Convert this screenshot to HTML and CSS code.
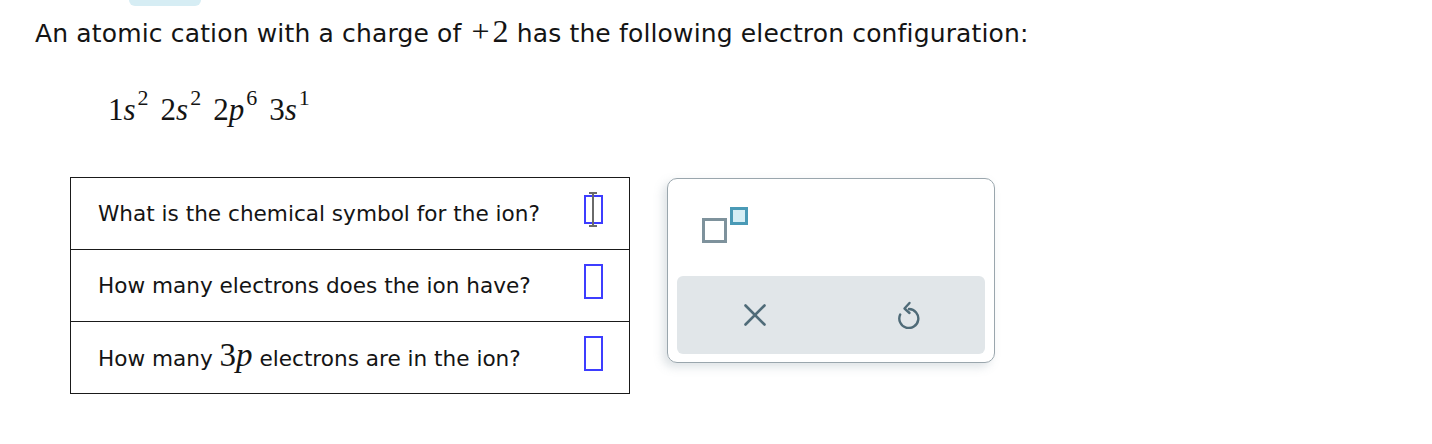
FILE: index.html
```html
<!DOCTYPE html>
<html>
<head>
<meta charset="utf-8">
<link rel="stylesheet" href="styles.css">
</head>
<body>
<div class="tab"></div>
<p class="intro">An atomic cation with a charge of <span class="math"><span class="op">+</span>2</span> has the following electron configuration:</p>
<div class="config">
  <span class="term">1<i>s</i><sup>2</sup></span>
  <span class="term">2<i>s</i><sup>2</sup></span>
  <span class="term">2<i>p</i><sup>6</sup></span>
  <span class="term">3<i>s</i><sup>1</sup></span>
</div>
<div class="work">
  <div class="qtable">
    <div class="qrow">
      <span class="qtext">What is the chemical symbol for the ion?</span>
      <span class="ansbox small"><span class="caret"></span></span>
    </div>
    <div class="qrow">
      <span class="qtext">How many electrons does the ion have?</span>
      <span class="ansbox"></span>
    </div>
    <div class="qrow">
      <span class="qtext">How many <span class="math big">3<i>p</i></span> electrons are in the ion?</span>
      <span class="ansbox"></span>
    </div>
  </div>
  <div class="panel">
    <div class="panel-top">
      <span class="supicon"><span class="base"></span><span class="exp"></span></span>
    </div>
    <div class="panel-actions">
      <svg class="icon" width="24" height="24" viewBox="0 0 24 24"><path d="M2.5 2.5 L21.5 21.5 M21.5 2.5 L2.5 21.5" stroke="#4f6b78" stroke-width="2.6" fill="none" stroke-linecap="round"/></svg>
      <svg class="icon" width="24" height="28" viewBox="0 0 24 28"><path d="M12 8 A9.5 9.5 0 1 1 3.2 13.5" stroke="#4f6b78" stroke-width="2.4" fill="none" stroke-linecap="round"/><path d="M12.5 2 L7.5 7.5 L12.5 12" stroke="#4f6b78" stroke-width="2.4" fill="none" stroke-linecap="round" stroke-linejoin="round"/></svg>
    </div>
  </div>
</div>
</body>
</html>
```
FILE: styles.css
```css
body {
  margin: 0;
  background: #ffffff;
  font-family: "DejaVu Sans", Verdana, sans-serif;
  color: #141414;
}
.tab {
  margin-left: 129px;
  width: 72px;
  height: 6px;
  background: #d6edf4;
  border-radius: 0 0 9px 9px;
}
.intro {
  margin: 13px 0 0 35px;
  font-size: 25px;
  letter-spacing: 0.15px;
  line-height: 30px;
}
.math {
  font-family: "Liberation Serif", "Times New Roman", serif;
  font-size: 32px;
  letter-spacing: 0;
  line-height: 20px;
}
.math .op {
  margin: 0 3px 0 2px;
}
.math i, .config i {
  font-style: italic;
}
.config {
  margin: 37px 0 0 108px;
  font-family: "Liberation Serif", "Times New Roman", serif;
  font-size: 31px;
  line-height: 32px;
  display: flex;
  gap: 12px;
}
.config sup {
  font-size: 22px;
  position: relative;
  top: -4px;
  margin-left: 2px;
}
.work {
  display: flex;
  align-items: flex-start;
  margin: 51px 0 0 70px;
  gap: 37px;
}
.qtable {
  width: 558px;
  border: 1px solid #1a1a1a;
}
.qrow {
  height: 71px;
  display: flex;
  align-items: center;
  justify-content: space-between;
  padding: 0 26px 0 27px;
  border-top: 1px solid #1a1a1a;
  font-size: 21.6px;
}
.qrow:first-child {
  border-top: none;
}
.math.big {
  font-size: 33px;
}
.ansbox {
  width: 15px;
  height: 31px;
  border: 2px solid #3d3dff;
  position: relative;
  display: block;
  margin-top: -9px;
}
.ansbox.small {
  height: 25px;
}
.caret {
  position: absolute;
  left: 6px;
  top: -5px;
  width: 2px;
  height: 35px;
  background: #6a6a6a;
}
.caret::before, .caret::after {
  content: "";
  position: absolute;
  left: -3px;
  width: 8px;
  height: 2px;
  background: #6a6a6a;
}
.caret::before { top: 0; }
.caret::after { bottom: 0; }
.panel {
  width: 328px;
  height: 185px;
  margin-top: 1px;
  border: 1px solid #9aa6ad;
  border-radius: 10px;
  box-shadow: -4px 4px 10px rgba(120, 140, 150, 0.25);
  padding: 0 9px 8px 9px;
  box-sizing: border-box;
  display: flex;
  flex-direction: column;
}
.panel-top {
  flex: 1;
  padding: 28px 0 0 25px;
}
.supicon {
  position: relative;
  display: block;
  width: 50px;
  height: 36px;
}
.supicon .base {
  position: absolute;
  left: 0;
  top: 11px;
  width: 19px;
  height: 19px;
  border: 3px solid #7e929c;
}
.supicon .exp {
  position: absolute;
  left: 28px;
  top: 0;
  width: 12px;
  height: 12px;
  border: 3px solid #4a9ab6;
  background: #d5eef5;
}
.panel-actions {
  height: 78px;
  background: #e1e6e9;
  border-radius: 6px;
  display: flex;
  align-items: center;
  justify-content: space-between;
  padding: 0 64px 0 66px;
}
.icon {
  display: block;
}
```
